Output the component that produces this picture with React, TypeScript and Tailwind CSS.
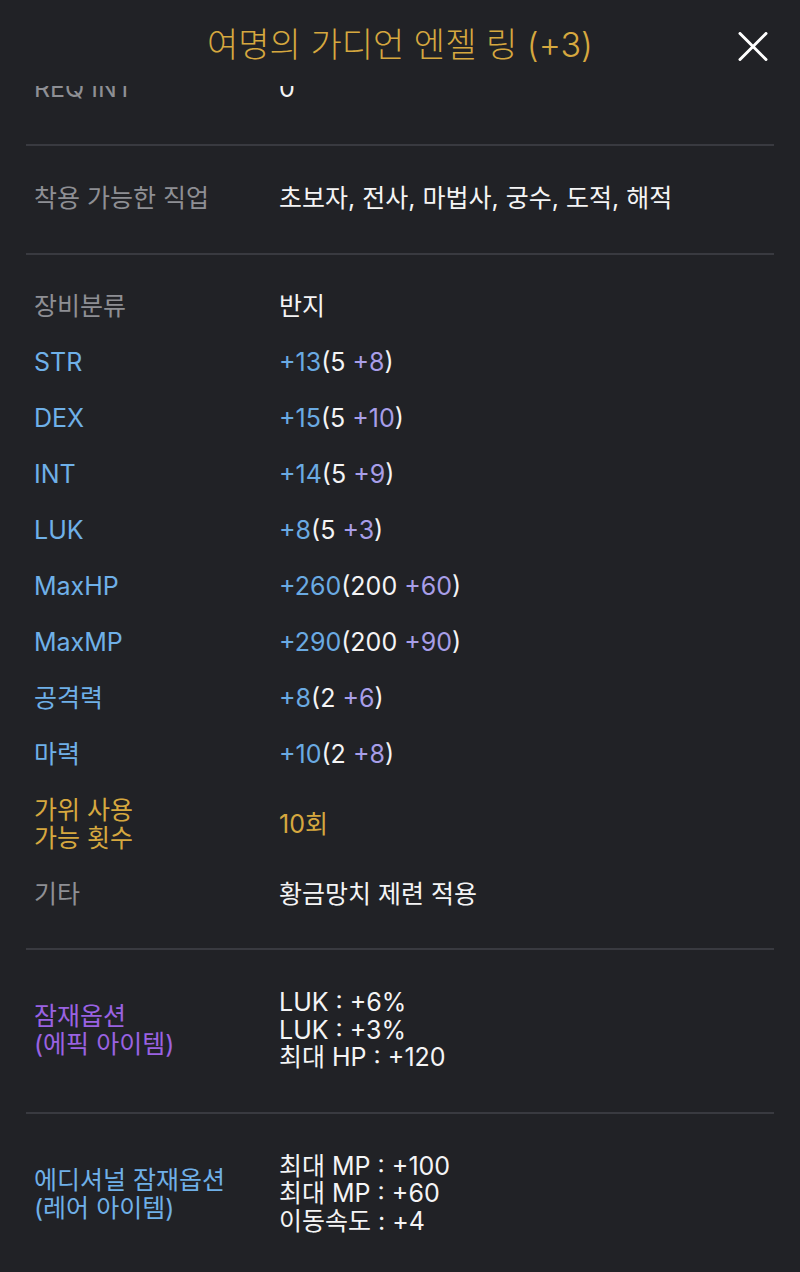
const font = { fontFamily: 'Inter, "Noto Sans CJK KR", "Noto Sans", sans-serif' };

type Stat = { label: string; total: string; base: string; add: string };

const stats: Stat[] = [
  { label: "STR", total: "+13", base: "5", add: "+8" },
  { label: "DEX", total: "+15", base: "5", add: "+10" },
  { label: "INT", total: "+14", base: "5", add: "+9" },
  { label: "LUK", total: "+8", base: "5", add: "+3" },
  { label: "MaxHP", total: "+260", base: "200", add: "+60" },
  { label: "MaxMP", total: "+290", base: "200", add: "+90" },
  { label: "공격력", total: "+8", base: "2", add: "+6" },
  { label: "마력", total: "+10", base: "2", add: "+8" },
];

function Row({ label, labelClass, children }: { label: React.ReactNode; labelClass: string; children: React.ReactNode }) {
  return (
    <div className="flex items-center h-[56px]">
      <div className={`w-[253px] shrink-0 pl-[8px] ${labelClass}`}>{label}</div>
      <div className="text-[#f4f4f5]">{children}</div>
    </div>
  );
}

export default function App() {
  return (
    <div className="w-[800px] h-[1272px] bg-[#212226] flex flex-col overflow-hidden text-[25px] leading-[28px]" style={font}>
      {/* Header */}
      <div className="relative h-[86px] shrink-0 flex items-center justify-center z-10 bg-[#212226]">
        <h1 className="text-[34px] text-[#d6a83f] font-light mt-[4px]">여명의 가디언 엔젤 링 (+3)</h1>
        <button className="absolute left-[738px] top-[32px]">
          <svg width="30" height="29" viewBox="0 0 30 29" fill="none" stroke="white" strokeWidth="3" strokeLinecap="round">
            <path d="M2 1.5 28 27.5M28 1.5 2 27.5" />
          </svg>
        </button>
      </div>

      <div className="flex-1 overflow-hidden mx-[26px]">
        {/* REQ INT (scrolled under header) */}
        <div className="mt-[-26px] pb-[28px] border-b-2 border-[#393a40]">
          <Row label="REQ INT" labelClass="text-[#8e8f94]">0</Row>
        </div>

        <div className="pt-[24px] pb-[27px] border-b-2 border-[#393a40]">
          <Row label="착용 가능한 직업" labelClass="text-[#8e8f94]">초보자, 전사, 마법사, 궁수, 도적, 해적</Row>
        </div>

        <div className="pt-[23px] pb-[26px] border-b-2 border-[#393a40]">
          <Row label="장비분류" labelClass="text-[#8e8f94]">반지</Row>
          {stats.map((s) => (
            <Row key={s.label} label={s.label} labelClass="text-[#6fb0e8]">
              <span className="text-[#6aaae2]">{s.total}</span>(
              {s.base} <span className="text-[#a89ee8]">{s.add}</span>)
            </Row>
          ))}
          <div className="flex items-center h-[84px]">
            <div className="w-[253px] shrink-0 pl-[8px] text-[#d6a83f]">
              가위 사용
              <br />
              가능 횟수
            </div>
            <div className="text-[#d6a83f]">10회</div>
          </div>
          <Row label="기타" labelClass="text-[#8e8f94]">황금망치 제련 적용</Row>
        </div>

        <div className="flex items-center pt-[39px] pb-[40px] border-b-2 border-[#393a40]">
          <div className="w-[253px] shrink-0 pl-[8px] text-[#9a62e2]">
            잠재옵션
            <br />
            (에픽 아이템)
          </div>
          <div className="text-[#f4f4f5] leading-[27.5px]">
            <div>LUK : +6%</div>
            <div>LUK : +3%</div>
            <div>최대 HP : +120</div>
          </div>
        </div>

        <div className="flex items-center pt-[39px]">
          <div className="w-[253px] shrink-0 pl-[8px] text-[#6fb0e8]">
            에디셔널 잠재옵션
            <br />
            (레어 아이템)
          </div>
          <div className="text-[#f4f4f5] leading-[27.5px]">
            <div>최대 MP : +100</div>
            <div>최대 MP : +60</div>
            <div>이동속도 : +4</div>
          </div>
        </div>
      </div>
    </div>
  );
}
